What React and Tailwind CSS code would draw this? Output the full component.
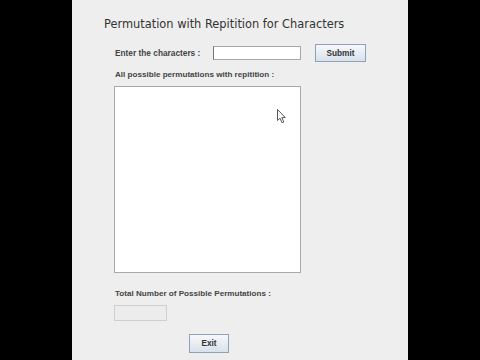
import React from "react";

const Cursor = () => (
  <svg className="absolute left-[277px] top-[109px]" width="10" height="15" viewBox="0 0 10 15">
    <path d="M0.5 0.5 L0.5 11.5 L3 9.2 L5 13.8 L6.8 13 L4.9 8.6 L8.3 8.6 Z" fill="#fff" stroke="#555" strokeWidth="1" />
  </svg>
);

const label = { fontFamily: "'Liberation Sans', sans-serif" };

const App = () => {
  return (
    <div className="relative flex h-[360px] w-[480px] bg-black">
      <div className="ml-[72px] flex h-full w-[336px] flex-col bg-[#eeeeee]">
        <h1 className="ml-[32px] mt-[16px] h-[16px] text-[11.4px] leading-[16px] text-[#333]" style={{ fontFamily: "'DejaVu Sans', sans-serif" }}>
          Permutation with Repitition for Characters
        </h1>
        <div className="ml-[43px] mt-[12px] flex h-[18px] items-center">
          <span className="w-[98px] text-[8.3px] font-bold text-[#444]" style={label}>
            Enter the characters :
          </span>
          <input
            type="text"
            className="h-[14px] w-[88px] border border-[#a8a8a8] border-l-[#777] bg-white outline-none"
          />
          <button
            type="button"
            className="ml-[14px] h-[18px] w-[51px] border border-[#8fa0b8] bg-gradient-to-b from-[#f6f8fb] to-[#d9e1ec] text-[8.3px] font-bold text-[#333]"
            style={label}
          >
            Submit
          </button>
        </div>
        <p className="ml-[43px] mt-[7px] h-[12px] text-[8.1px] font-bold leading-[12px] text-[#444]" style={label}>
          All possible permutations with repitition :
        </p>
        <div className="ml-[42px] mt-[5px] h-[187px] w-[187px] border border-[#a9a9a9] bg-white" />
        <p className="ml-[43px] mt-[15px] h-[12px] text-[8.1px] font-bold leading-[12px] text-[#444]" style={label}>
          Total Number of Possible Permutations :
        </p>
        <div className="ml-[42px] mt-[5px] h-[16px] w-[53px] border border-[#cfcfcf] bg-[#ececec]" />
        <div className="mt-[13px] flex">
          <button
            type="button"
            className="ml-[117px] h-[19px] w-[40px] border border-[#8fa0b8] bg-gradient-to-b from-[#f6f8fb] to-[#d9e1ec] text-[8.3px] font-bold text-[#333]"
            style={label}
          >
            Exit
          </button>
        </div>
      </div>
      <Cursor />
    </div>
  );
};

export default App;
